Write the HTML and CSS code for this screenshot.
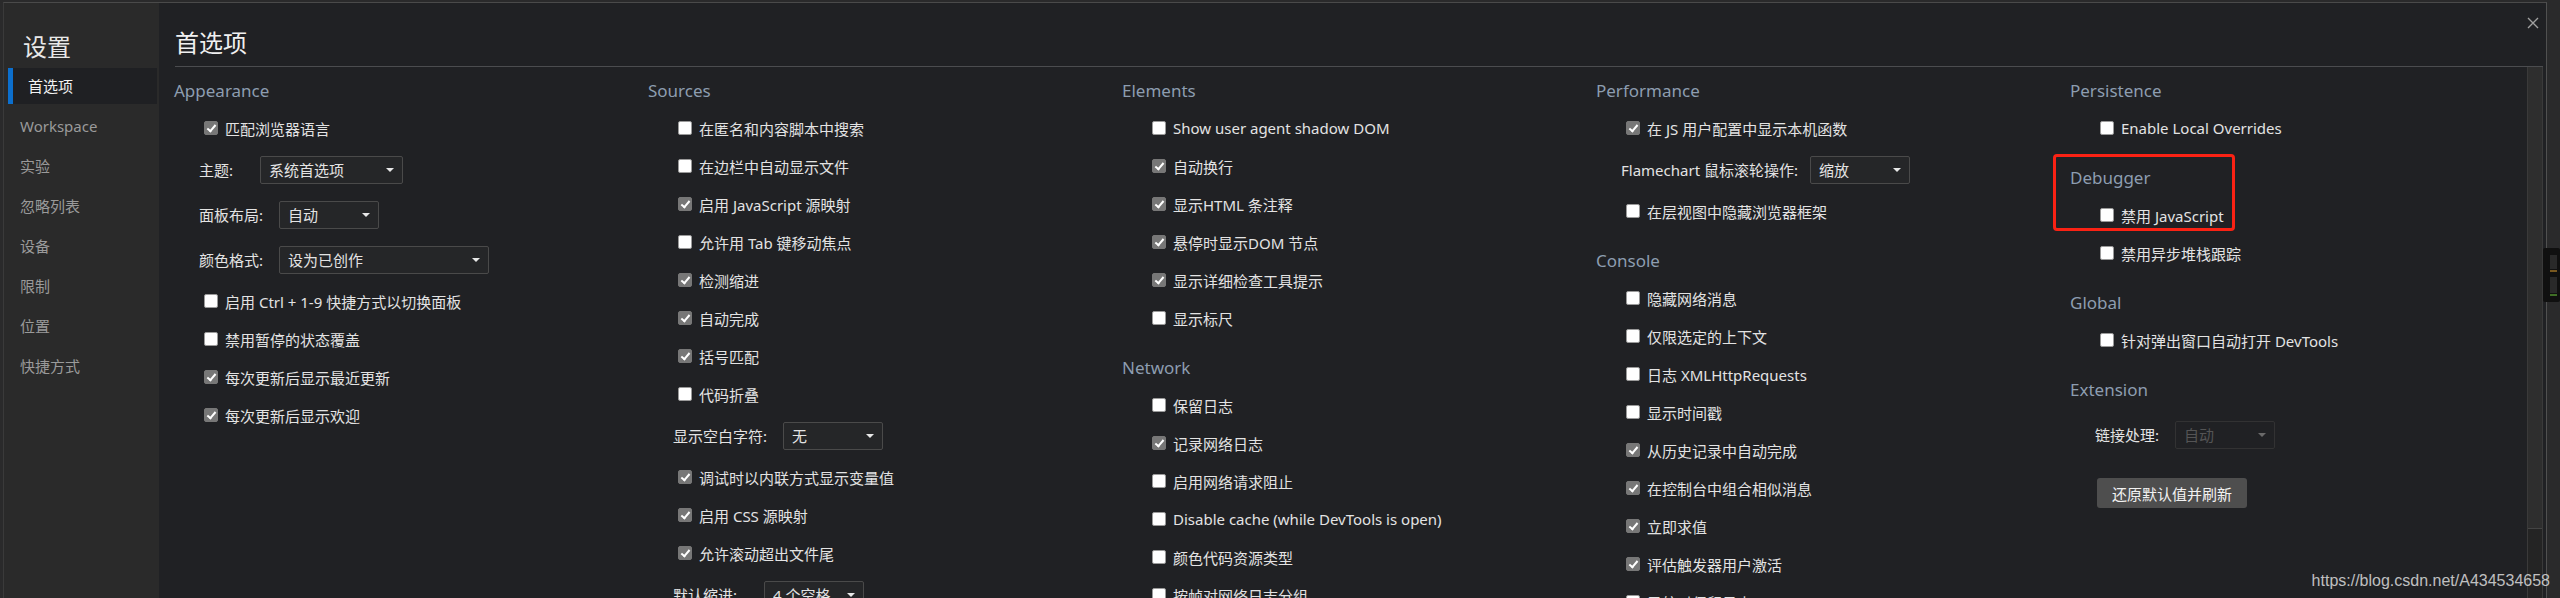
FILE: index.html
```html
<!DOCTYPE html>
<html lang="zh-CN">
<head>
<meta charset="UTF-8">
<title>设置 - 首选项</title>
<link rel="stylesheet" href="styles.css">
</head>
<body>
<div class="window">
  <aside class="sidebar">
    <h1>设置</h1>
    <nav class="tabs">
      <div class="tab active">首选项</div>
      <div class="tab">Workspace</div>
      <div class="tab">实验</div>
      <div class="tab">忽略列表</div>
      <div class="tab">设备</div>
      <div class="tab">限制</div>
      <div class="tab">位置</div>
      <div class="tab">快捷方式</div>
    </nav>
  </aside>

  <main class="prefs">
    <header class="prefs-head">
      <h2>首选项</h2>
      <button class="close" title="关闭">
        <svg width="12" height="12" viewBox="0 0 12 12"><path d="M1 1L11 11M11 1L1 11" stroke="#a0a0a0" stroke-width="1.4"/></svg>
      </button>
    </header>

    <div class="prefs-body">
      <div class="columns">
        <!-- 第1列 -->
        <div class="column">
          <section class="group">
            <h3>Appearance</h3>
            <label class="row"><input type="checkbox" checked>匹配浏览器语言</label>
            <div class="field"><span class="label label-wide">主题:</span>
              <span class="dropdown dd-theme"><select><option>系统首选项</option></select></span></div>
            <div class="field"><span class="label">面板布局:</span>
              <span class="dropdown"><select><option>自动</option></select></span></div>
            <div class="field"><span class="label">颜色格式:</span>
              <span class="dropdown dd-color"><select><option>设为已创作</option></select></span></div>
            <label class="row"><input type="checkbox">启用 Ctrl + 1-9 快捷方式以切换面板</label>
            <label class="row"><input type="checkbox">禁用暂停的状态覆盖</label>
            <label class="row"><input type="checkbox" checked>每次更新后显示最近更新</label>
            <label class="row"><input type="checkbox" checked>每次更新后显示欢迎</label>
          </section>
        </div>

        <!-- 第2列 -->
        <div class="column">
          <section class="group">
            <h3>Sources</h3>
            <label class="row"><input type="checkbox">在匿名和内容脚本中搜索</label>
            <label class="row"><input type="checkbox">在边栏中自动显示文件</label>
            <label class="row"><input type="checkbox" checked>启用 JavaScript 源映射</label>
            <label class="row"><input type="checkbox">允许用 Tab 键移动焦点</label>
            <label class="row"><input type="checkbox" checked>检测缩进</label>
            <label class="row"><input type="checkbox" checked>自动完成</label>
            <label class="row"><input type="checkbox" checked>括号匹配</label>
            <label class="row"><input type="checkbox">代码折叠</label>
            <div class="field"><span class="label">显示空白字符:</span>
              <span class="dropdown"><select><option>无</option></select></span></div>
            <label class="row"><input type="checkbox" checked>调试时以内联方式显示变量值</label>
            <label class="row"><input type="checkbox" checked>启用 CSS 源映射</label>
            <label class="row"><input type="checkbox" checked>允许滚动超出文件尾</label>
            <div class="field"><span class="label label-wide">默认缩进:</span>
              <span class="dropdown"><select><option>4 个空格</option></select></span></div>
          </section>
        </div>

        <!-- 第3列 -->
        <div class="column">
          <section class="group">
            <h3>Elements</h3>
            <label class="row"><input type="checkbox">Show user agent shadow DOM</label>
            <label class="row"><input type="checkbox" checked>自动换行</label>
            <label class="row"><input type="checkbox" checked>显示HTML 条注释</label>
            <label class="row"><input type="checkbox" checked>悬停时显示DOM 节点</label>
            <label class="row"><input type="checkbox" checked>显示详细检查工具提示</label>
            <label class="row"><input type="checkbox">显示标尺</label>
          </section>
          <section class="group">
            <h3>Network</h3>
            <label class="row"><input type="checkbox">保留日志</label>
            <label class="row"><input type="checkbox" checked>记录网络日志</label>
            <label class="row"><input type="checkbox">启用网络请求阻止</label>
            <label class="row"><input type="checkbox">Disable cache (while DevTools is open)</label>
            <label class="row"><input type="checkbox">颜色代码资源类型</label>
            <label class="row"><input type="checkbox">按帧对网络日志分组</label>
          </section>
        </div>

        <!-- 第4列 -->
        <div class="column">
          <section class="group">
            <h3>Performance</h3>
            <label class="row"><input type="checkbox" checked>在 JS 用户配置中显示本机函数</label>
            <div class="field field-tight"><span class="label">Flamechart 鼠标滚轮操作:</span>
              <span class="dropdown"><select><option>缩放</option></select></span></div>
            <label class="row"><input type="checkbox">在层视图中隐藏浏览器框架</label>
          </section>
          <section class="group">
            <h3>Console</h3>
            <label class="row"><input type="checkbox">隐藏网络消息</label>
            <label class="row"><input type="checkbox">仅限选定的上下文</label>
            <label class="row"><input type="checkbox">日志 XMLHttpRequests</label>
            <label class="row"><input type="checkbox">显示时间戳</label>
            <label class="row"><input type="checkbox" checked>从历史记录中自动完成</label>
            <label class="row"><input type="checkbox" checked>在控制台中组合相似消息</label>
            <label class="row"><input type="checkbox" checked>立即求值</label>
            <label class="row"><input type="checkbox" checked>评估触发器用户激活</label>
            <label class="row"><input type="checkbox">导航时保留日志</label>
          </section>
        </div>

        <!-- 第5列 -->
        <div class="column">
          <section class="group">
            <h3>Persistence</h3>
            <label class="row"><input type="checkbox">Enable Local Overrides</label>
          </section>
          <section class="group marked">
            <h3>Debugger</h3>
            <label class="row"><input type="checkbox">禁用 JavaScript</label>
            <label class="row"><input type="checkbox">禁用异步堆栈跟踪</label>
            <div class="mark"></div>
          </section>
          <section class="group">
            <h3>Global</h3>
            <label class="row"><input type="checkbox">针对弹出窗口自动打开 DevTools</label>
          </section>
          <section class="group extension">
            <h3>Extension</h3>
            <div class="field"><span class="label">链接处理:</span>
              <span class="dropdown disabled"><select disabled><option>自动</option></select></span></div>
            <button class="reset">还原默认值并刷新</button>
          </section>
        </div>
      </div>

      <div class="scrollbar"><div class="thumb"></div></div>
    </div>
  </main>
</div>

<div class="meter">
  <svg width="17" height="54" viewBox="0 0 17 54">
    <rect width="17" height="54" rx="2" fill="#101010"/>
    <path d="M7 8h7M7 10h7M7 12h7M7 14h7M7 16h7M7 18h7M7 20h7M7 30h7M7 32h7M7 34h7M7 36h7M7 38h7M7 40h7M7 42h7M7 44h7" stroke="#5a5a5a" stroke-width="0.7"/>
    <path d="M7 23h7" stroke="#e0a030" stroke-width="1"/>
    <path d="M7 47h7" stroke="#6ecb3c" stroke-width="1"/>
  </svg>
</div>

<div class="watermark">https://blog.csdn.net/A434534658</div>
</body>
</html>
```

FILE: styles.css
```css
html, body {
  height: 100%;
  margin: 0;
}
body {
  background-color: #2a2a2b;
  font-family: "Segoe UI", "Noto Sans", "Noto Sans CJK SC", sans-serif;
  font-size: 15px;
  color: #e3e3e3;
  overflow: hidden;
  position: relative;
}
.window {
  display: flex;
  height: 596px;
  margin: 2px 13px 0 3px;
  border-top: 1px solid #4a4a4a;
  border-left: 1px solid #3a3a3a;
  border-right: 1px solid #505050;
  background-color: #202124;
  overflow: hidden;
}

/* 左侧导航 */
.sidebar {
  width: 155px;
  flex-shrink: 0;
  background-color: #2a2a2a;
}
.sidebar h1 {
  margin: 28px 0 0 19px;
  font-size: 24px;
  font-weight: 400;
  line-height: 32px;
  color: #e8e8e8;
}
.tabs {
  margin-top: 5px;
}
.tab {
  height: 36px;
  margin-bottom: 4px;
  padding-left: 16px;
  line-height: 36px;
  color: #9a9a9a;
}
.tab.active {
  margin: 0 2px 4px 4px;
  padding-left: 15px;
  border-left: 5px solid #0c6fcd;
  background-color: #1f2023;
  color: #f2f2f2;
}

/* 右侧内容 */
.prefs {
  flex: 1;
  display: flex;
  flex-direction: column;
  min-width: 0;
}
.prefs-head {
  display: flex;
  align-items: flex-end;
  height: 64px;
  margin: 0 3px 0 16px;
  border-bottom: 1px solid #4b4c4f;
  box-sizing: border-box;
}
.prefs-head h2 {
  margin: 0 0 7px 0;
  font-size: 24px;
  font-weight: 400;
  line-height: 32px;
  color: #f0f0f0;
}
.close {
  align-self: flex-start;
  margin: 12px 2px 0 auto;
  padding: 0;
  width: 16px;
  height: 16px;
  border: 0;
  background: none;
  display: flex;
  align-items: center;
  justify-content: center;
}
.prefs-body {
  flex: 1;
  display: flex;
  min-height: 0;
  padding-right: 3px;
}
.columns {
  flex: 1;
  display: grid;
  grid-template-columns: repeat(4, 474px) 1fr;
  padding: 6px 0 0 15px;
  min-width: 0;
}
.scrollbar {
  width: 14px;
  flex-shrink: 0;
  border-left: 1px solid #3a3a3a;
  border-right: 1px solid #3a3a3a;
  background-color: #242424;
}
.thumb {
  height: 461px;
  background-color: #2e2e2e;
  border-bottom: 1px solid #444;
}

/* 分组 */
.group + .group {
  margin-top: 13px;
}
.group h3 {
  margin: 0;
  font-size: 17px;
  font-weight: 400;
  line-height: 36px;
  color: #8d9db0;
}
.row {
  display: flex;
  align-items: center;
  gap: 7px;
  height: 38px;
  padding-left: 30px;
  white-space: nowrap;
}
.row input {
  appearance: none;
  -webkit-appearance: none;
  position: relative;
  width: 14px;
  height: 14px;
  margin: 0;
  border: 1px solid #9a9a9a;
  border-radius: 2px;
  background-color: #fff;
  flex-shrink: 0;
}
.row input:checked {
  border-color: #777;
  background-color: #777;
}
.row input:checked::after {
  content: "";
  position: absolute;
  left: 4px;
  top: 1px;
  width: 3px;
  height: 7px;
  border-right: 2px solid #fff;
  border-bottom: 2px solid #fff;
  transform: rotate(40deg);
}
.field {
  display: flex;
  align-items: center;
  gap: 16px;
  height: 45px;
  padding-left: 25px;
  white-space: nowrap;
}
.field-tight {
  gap: 12px;
}
.label-wide {
  margin-right: 11px;
}
.extension .field {
  margin-top: 4px;
}
.dropdown {
  position: relative;
  display: inline-block;
  width: 100px;
  height: 28px;
}
.dropdown.dd-theme {
  width: 143px;
}
.dropdown.dd-color {
  width: 210px;
}
.dropdown select {
  appearance: none;
  -webkit-appearance: none;
  width: 100%;
  height: 100%;
  padding: 0 0 0 8px;
  border: 1px solid #4a4a4a;
  border-radius: 2px;
  background-color: #252628;
  color: #e3e3e3;
  font: inherit;
}
.dropdown::after {
  content: "";
  position: absolute;
  right: 9px;
  top: 12px;
  border-left: 4px solid transparent;
  border-right: 4px solid transparent;
  border-top: 4px solid #e8e8e8;
}
.dropdown.disabled select {
  color: #6a6a6a;
  border-color: #3a3a3a;
  background-color: #202124;
}
.dropdown.disabled::after {
  border-top-color: #6a6a6a;
}
.reset {
  margin: 21px 0 0 27px;
  width: 150px;
  height: 30px;
  border: 0;
  border-radius: 3px;
  background-color: #4e4e4e;
  color: #f2f2f2;
  font: inherit;
}

/* 红框标注 */
.marked {
  position: relative;
}
.mark {
  position: absolute;
  left: -17px;
  top: -6px;
  width: 182px;
  height: 77px;
  border: 3px solid #fa2214;
  border-radius: 4px;
  box-sizing: border-box;
  pointer-events: none;
}

.meter {
  position: absolute;
  right: 0;
  top: 248px;
  line-height: 0;
}
.watermark {
  position: absolute;
  right: 10px;
  bottom: 8px;
  font-family: "Liberation Sans", Arial, sans-serif;
  font-size: 16px;
  color: rgba(255, 255, 255, 0.72);
}
```
